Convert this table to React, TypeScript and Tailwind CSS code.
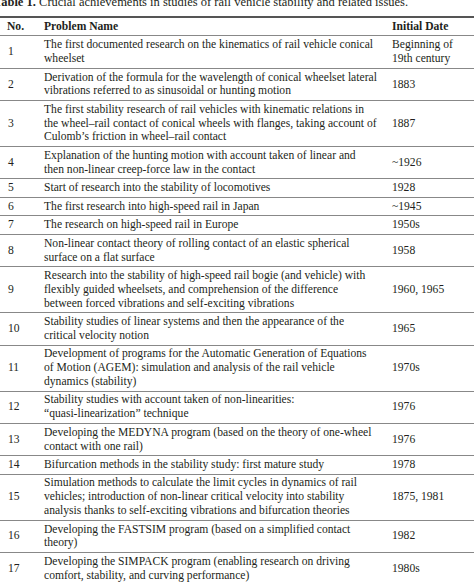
import React from "react";

type Row = { no: string; lines: string[]; date: string[] };

const rows: Row[] = [
  { no: "1", lines: ["The first documented research on the kinematics of rail vehicle conical", "wheelset"], date: ["Beginning of", "19th century"] },
  { no: "2", lines: ["Derivation of the formula for the wavelength of conical wheelset lateral", "vibrations referred to as sinusoidal or hunting motion"], date: ["1883"] },
  { no: "3", lines: ["The first stability research of rail vehicles with kinematic relations in", "the wheel\u2013rail contact of conical wheels with flanges, taking account of", "Culomb\u2019s friction in wheel\u2013rail contact"], date: ["1887"] },
  { no: "4", lines: ["Explanation of the hunting motion with account taken of linear and", "then non-linear creep-force law in the contact"], date: ["~1926"] },
  { no: "5", lines: ["Start of research into the stability of locomotives"], date: ["1928"] },
  { no: "6", lines: ["The first research into high-speed rail in Japan"], date: ["~1945"] },
  { no: "7", lines: ["The research on high-speed rail in Europe"], date: ["1950s"] },
  { no: "8", lines: ["Non-linear contact theory of rolling contact of an elastic spherical", "surface on a flat surface"], date: ["1958"] },
  { no: "9", lines: ["Research into the stability of high-speed rail bogie (and vehicle) with", "flexibly guided wheelsets, and comprehension of the difference", "between forced vibrations and self-exciting vibrations"], date: ["1960, 1965"] },
  { no: "10", lines: ["Stability studies of linear systems and then the appearance of the", "critical velocity notion"], date: ["1965"] },
  { no: "11", lines: ["Development of programs for the Automatic Generation of Equations", "of Motion (AGEM): simulation and analysis of the rail vehicle", "dynamics (stability)"], date: ["1970s"] },
  { no: "12", lines: ["Stability studies with account taken of non-linearities:", "\u201cquasi-linearization\u201d technique"], date: ["1976"] },
  { no: "13", lines: ["Developing the MEDYNA program (based on the theory of one-wheel", "contact with one rail)"], date: ["1976"] },
  { no: "14", lines: ["Bifurcation methods in the stability study: first mature study"], date: ["1978"] },
  { no: "15", lines: ["Simulation methods to calculate the limit cycles in dynamics of rail", "vehicles; introduction of non-linear critical velocity into stability", "analysis thanks to self-exciting vibrations and bifurcation theories"], date: ["1875, 1981"] },
  { no: "16", lines: ["Developing the FASTSIM program (based on a simplified contact", "theory)"], date: ["1982"] },
  { no: "17", lines: ["Developing the SIMPACK program (enabling research on driving", "comfort, stability, and curving performance)"], date: ["1980s"] },
];

function Lines({ items }: { items: string[] }) {
  return (
    <>
      {items.map((l, i) => (
        <div key={i} className="whitespace-nowrap">
          {l}
        </div>
      ))}
    </>
  );
}

export default function App() {
  return (
    <div
      className="w-[474px] h-[583px] overflow-hidden bg-white text-[#231f20] text-[11.6px] leading-[13.8px]"
      style={{ fontFamily: '"Liberation Serif", "Times New Roman", serif' }}
    >
      <div className="-mt-[5px] -ml-[6px] mb-[7px] whitespace-nowrap text-[12.5px] leading-[14px]">
        <span className="font-bold">Table 1.</span> Crucial achievements in studies of rail vehicle stability and related issues.
      </div>
      <div className="border-t-2 border-[#555]">
        <div className="grid grid-cols-[44px_348px_1fr] border-b border-[#888] py-[1.85px] font-bold">
          <div className="pl-[7px]">No.</div>
          <div>Problem Name</div>
          <div>Initial Date</div>
        </div>
        {rows.map((r) => (
          <div
            key={r.no}
            className="grid grid-cols-[44px_348px_1fr] border-b border-[#888] py-[1.85px]"
          >
            <div className="pl-[8px] flex items-center">{r.no}</div>
            <div>
              <Lines items={r.lines} />
            </div>
            <div className="flex flex-col justify-center">
              <Lines items={r.date} />
            </div>
          </div>
        ))}
      </div>
    </div>
  );
}
